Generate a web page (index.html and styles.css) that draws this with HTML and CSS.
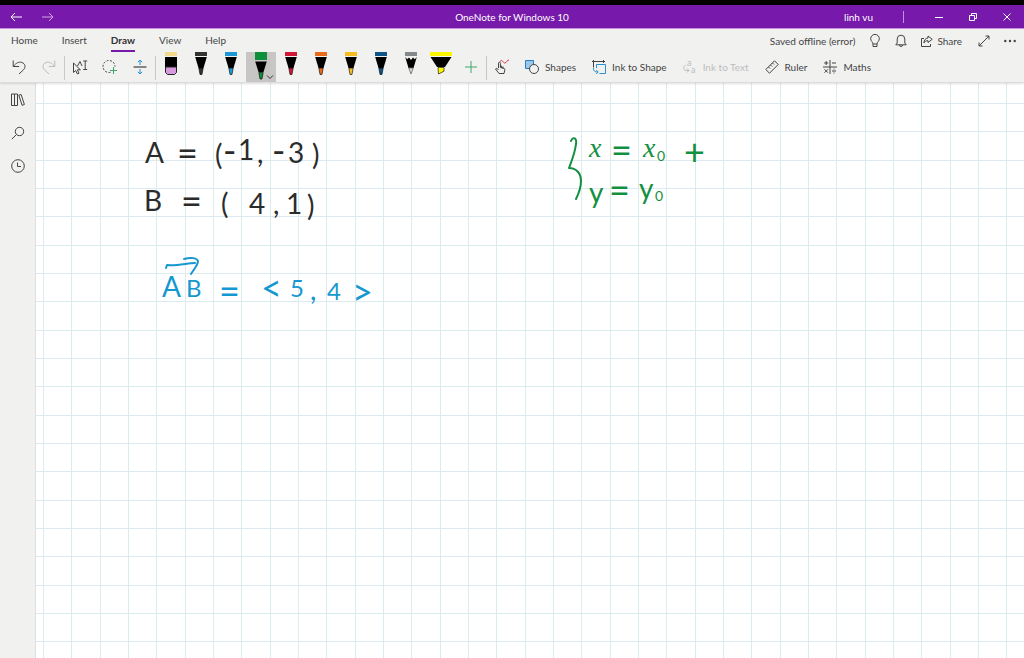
FILE: index.html
```html
<!DOCTYPE html>
<html lang="en">
<head>
    <meta charset="UTF-8">
    <meta name="viewport" content="width=device-width, initial-scale=1.0">
    <title>OneNote for Windows 10</title>
    <link rel="stylesheet" href="styles.css">
</head>
<body>
    <header class="titlebar">
        <div class="nav-buttons">
            <button class="nav-btn" aria-label="Back">
                <svg width="12" height="10" viewBox="0 0 12 10"><path d="M12 5H1M5 1L1 5l4 4"/></svg>
            </button>
            <button class="nav-btn dim" aria-label="Forward">
                <svg width="12" height="10" viewBox="0 0 12 10"><path d="M0 5h11M7 1l4 4-4 4"/></svg>
            </button>
        </div>
        <h1 class="app-title">OneNote for Windows 10</h1>
        <div class="window-controls">
            <span class="user-name">linh vu</span>
            <span class="title-divider"></span>
            <button class="window-btn" aria-label="Minimise">
                <svg width="8" height="8" viewBox="0 0 8 8"><path d="M0 4.5h8"/></svg>
            </button>
            <button class="window-btn" aria-label="Restore">
                <svg width="8" height="8" viewBox="0 0 8 8"><path d="M.5 2.5h5v5h-5zM2.5 2V.5h5v5H6"/></svg>
            </button>
            <button class="window-btn" aria-label="Close">
                <svg width="8" height="8" viewBox="0 0 8 8"><path d="M.5.5l7 7M7.5.5l-7 7"/></svg>
            </button>
        </div>
    </header>

    <nav class="menubar">
        <div class="tabs">
            <button class="tab">Home</button>
            <button class="tab">Insert</button>
            <button class="tab active">Draw</button>
            <button class="tab">View</button>
            <button class="tab">Help</button>
        </div>
        <div class="menu-actions">
            <span class="sync-status">Saved offline (error)</span>
            <button class="menu-btn" aria-label="Tell me">
                <svg width="12" height="14" viewBox="0 0 12 14"><path d="M4 10c0-2-2.300-2.600-2.300-5.300a4.300 4.300 0 0 1 8.600 0C10.300 7.400 8 8 8 10zM4 10v2.500h4V10"/></svg>
            </button>
            <button class="menu-btn" aria-label="Notifications">
                <svg width="12" height="14" viewBox="0 0 12 14"><path d="M.8 10.800h10.400L9.800 9V5a3.800 3.800 0 0 0-7.600 0v4zM4.500 11a1.500 1.500 0 0 0 3 0"/></svg>
            </button>
            <button class="menu-btn share">
                <svg width="12" height="12" viewBox="0 0 12 12"><path d="M3 3.500H.5v8h9V9M7 1l4.200 3.300L7 7.500V5.700C5 5.600 3.800 6.500 3 8c0-3 1.500-4.800 4-5z"/></svg>
                Share
            </button>
            <button class="menu-btn" aria-label="Full screen">
                <svg width="12" height="12" viewBox="0 0 12 12"><path d="M1 11L11 1M7.500 1H11v3.500M1 7.500V11h3.500"/></svg>
            </button>
            <button class="menu-btn" aria-label="More">
                <svg class="dots" width="12" height="12" viewBox="0 0 12 12"><circle cx="1.300" cy="6" r="1.200"/><circle cx="6" cy="6" r="1.200"/><circle cx="10.700" cy="6" r="1.200"/></svg>
            </button>
        </div>
    </nav>

    <div class="toolbar">
        <button class="tool" aria-label="Undo">
            <svg width="14" height="16" viewBox="0 0 14 16"><path d="M1.200 1.500v6h6M1.500 7.200C4 4 7 2.500 9.800 3.400c3.700 1.300 4 5 1.800 7.300L7 15"/></svg>
        </button>
        <button class="tool faded" aria-label="Redo">
            <svg width="14" height="16" viewBox="0 0 14 16"><path d="M12.800 1.500v6h-6M12.500 7.200C10 4 7 2.500 4.200 3.400c-3.700 1.300-4 5-1.800 7.300L7 15"/></svg>
        </button>
        <span class="divider"></span>
        <button class="tool" aria-label="Select text">
            <svg width="16" height="16" viewBox="0 0 16 16"><path d="M1.500 4v9.500l2.200-2 1.700 3.500 1.600-.8-1.600-3.400h3zM5.500 7L8 2.500 10 7M11.200 2h4M13.200 2v8.500M11.200 10.500h4"/></svg>
        </button>
        <button class="tool" aria-label="Lasso select">
            <svg width="16" height="16" viewBox="0 0 16 16"><path stroke-dasharray="2 1.500" d="M8.500 13.300A6 6 0 1 1 13 7.500"/><path class="green" d="M11.500 8v7M8 11.500h7"/></svg>
        </button>
        <button class="tool" aria-label="Insert space">
            <svg width="14" height="16" viewBox="0 0 14 16"><path stroke="#858585" stroke-width="2" d="M.5 8h13"/><path class="blue" d="M7 6V1M4.800 3.200L7 1l2.200 2.200M7 10v5M4.800 12.800L7 15l2.200-2.200"/></svg>
        </button>
        <span class="divider"></span>

        <button class="tool pen" aria-label="Eraser">
            <svg width="14" height="24" viewBox="0 0 14 24"><path fill="#f3d98c" d="M1 0h12v4H1z"/><path fill="#000" d="M1 5h12v11H1z"/><path fill="#d59bdc" stroke="#222" d="M1.500 15h11v5.500l-2 2h-7l-2-2z"/></svg>
        </button>
        <button class="tool pen black" aria-label="Black pen">
            <svg width="14" height="24" viewBox="0 0 14 24"><path class="ink" d="M1 0h12v4H1z"/><path d="M1.200 5h11.600L9.500 16h-5z"/><path class="ink tip" d="M4.800 16h4.400L8 22.500H6z"/></svg>
        </button>
        <button class="tool pen sky" aria-label="Light blue pen">
            <svg width="14" height="24" viewBox="0 0 14 24"><path class="ink" d="M1 0h12v4H1z"/><path d="M1.200 5h11.600L9.500 16h-5z"/><path class="ink tip" d="M4.800 16h4.400L8 22.500H6z"/></svg>
        </button>
        <button class="tool pen leaf selected" aria-label="Green pen">
            <svg width="28" height="28" viewBox="0 0 28 28"><path class="ink" d="M8 0h12v8H8z"/><path d="M8.200 9.500h11.600L16.500 20h-5z"/><path class="ink tip" d="M11.800 20.500h4.400L15 27h-2z"/><path class="chevron" d="M20 23.500l3 3 3-3"/></svg>
        </button>
        <button class="tool pen red" aria-label="Red pen">
            <svg width="14" height="24" viewBox="0 0 14 24"><path class="ink" d="M1 0h12v4H1z"/><path d="M1.200 5h11.600L9.500 16h-5z"/><path class="ink tip" d="M4.800 16h4.400L8 22.500H6z"/></svg>
        </button>
        <button class="tool pen orange" aria-label="Orange pen">
            <svg width="14" height="24" viewBox="0 0 14 24"><path class="ink" d="M1 0h12v4H1z"/><path d="M1.200 5h11.600L9.500 16h-5z"/><path class="ink tip" d="M4.800 16h4.400L8 22.500H6z"/></svg>
        </button>
        <button class="tool pen gold" aria-label="Gold pen">
            <svg width="14" height="24" viewBox="0 0 14 24"><path class="ink" d="M1 0h12v4H1z"/><path d="M1.200 5h11.600L9.500 16h-5z"/><path class="ink tip" d="M4.800 16h4.400L8 22.500H6z"/></svg>
        </button>
        <button class="tool pen navy" aria-label="Dark blue pen">
            <svg width="14" height="24" viewBox="0 0 14 24"><path class="ink" d="M1 0h12v4H1z"/><path d="M1.200 5h11.600L9.500 16h-5z"/><path class="ink tip" d="M4.800 16h4.400L8 22.500H6z"/></svg>
        </button>
        <button class="tool pen pencil" aria-label="Pencil">
            <svg width="14" height="24" viewBox="0 0 14 24"><path class="ink" d="M1 0h12v4H1z"/><path d="M1.200 5l2 2.200L5 5.500 7 8l2-2.500 1.800 1.700 2-2.200L9.500 16h-5z"/><path fill="#ddd" stroke="#666" stroke-width=".8" d="M4.800 16h4.400L7 22z"/></svg>
        </button>
        <button class="tool pen yellow" aria-label="Highlighter">
            <svg width="22" height="24" viewBox="0 0 22 24"><path class="ink" d="M0 0h22v4H0z"/><path d="M.5 5h21L15 15H7z"/><path class="ink tip" d="M8 15.500h6v3.700L8.500 22z"/></svg>
        </button>
        <button class="tool" aria-label="Add pen">
            <svg width="12" height="12" viewBox="0 0 12 12"><path class="green" d="M6 0v12M0 6h12"/></svg>
        </button>
        <span class="divider"></span>

        <button class="tool" aria-label="Draw with touch">
            <svg width="16" height="16" viewBox="0 0 16 16"><path d="M4.500 9V4.200c0-1.400 1.900-1.400 1.900 0V8.500l3.600.9c.8.200 1 .8.800 1.600L10 14.500H5L1.500 10c.8-1.200 2.200-.4 3 .8M6.400 7h1.200v2M9 7.500v2"/><path class="scribble" d="M6 2.500C9-1 9 6 12 3.500 13 2.700 13 1 15 1"/></svg>
        </button>
        <button class="tool-label">
            <svg width="14" height="14" viewBox="0 0 14 14"><path fill="#9bc7ea" stroke="#2b7cbd" d="M.5.5h8v8h-8z"/><circle cx="9" cy="9" r="4.500" fill="#f1f1f0"/></svg>
            Shapes
        </button>
        <button class="tool-label">
            <svg width="14" height="14" viewBox="0 0 14 14"><path d="M1.500 0v3M11.500 0v3M0 1.500h13M1.500 1.500v6"/><path class="blue" d="M4.500 8V4.500h9v9h-6M1.500 8c0 3 1 4 4.500 4M4.200 10L6.200 12l-2 2"/></svg>
            Ink to Shape
        </button>
        <button class="tool-label" disabled>
            <svg width="14" height="14" viewBox="0 0 14 14"><text class="glyph" x="4" y="6">a</text><text class="glyph" x="8" y="13">a</text><path d="M2.500 5C0 7 0 10 3 10.500h3M4 8.500l2 2-2 2"/></svg>
            Ink to Text
        </button>
        <button class="tool-label">
            <svg width="14" height="14" viewBox="0 0 14 14"><path d="M.8 9.500L9.500.8l3.700 3.700-8.700 8.700zM3.500 7l1.500 1.500M5.500 5l1.500 1.500M7.500 3L9 4.500"/></svg>
            Ruler
        </button>
        <button class="tool-label">
            <svg width="14" height="14" viewBox="0 0 14 14"><path d="M7 0v14M0 7h14M1.200 3h4M3.200 1v4M9 3h4M1.500 9.300l3.400 3.400M4.900 9.300l-3.400 3.400M9 11h4M11 8.500v1M11 12.500v1"/></svg>
            Maths
        </button>
    </div>

    <div class="workspace">
        <aside class="sidebar">
            <button class="side-btn" aria-label="Notebooks">
                <svg width="14" height="14" viewBox="0 0 14 14"><path d="M.5 1h3v11.500h-3zM3.500 1h3v11.500h-3zM7.800 2.200l2.300-.7 3.300 10-2.300.8z"/></svg>
            </button>
            <button class="side-btn" aria-label="Search">
                <svg width="14" height="14" viewBox="0 0 14 14"><circle cx="8.500" cy="5.500" r="4.200"/><path d="M5.500 8.500L.8 13.200"/></svg>
            </button>
            <button class="side-btn" aria-label="Recent notes">
                <svg width="14" height="14" viewBox="0 0 14 14"><circle cx="7" cy="7" r="6.300"/><path d="M6.500 3.500v4H10"/></svg>
            </button>
        </aside>

        <main class="page">
            <svg class="canvas" width="100%" height="100%">
                <defs>
                    <!-- three grid cells per tile -->
                    <pattern id="grid" x="7" y="20" width="85" height="85" patternUnits="userSpaceOnUse">
                        <path class="rule" d="M.5 0v85M28.500 0v85M57.500 0v85M0 .5h85M0 28.500h85M0 57.500h85"/>
                    </pattern>
                </defs>
                <rect class="paper" width="100%" height="100%" fill="url(#grid)"/>

                <g class="note dark">
                    <text x="109" y="80">A</text>
                    <text class="big" x="141" y="83">=</text>
                    <text x="179" y="82">(</text>
                    <text class="big" x="187" y="81">-</text>
                    <text x="202" y="77">1</text>
                    <text x="221" y="80">,</text>
                    <text class="big" x="236" y="81">-</text>
                    <text x="252" y="80">3</text>
                    <text x="276" y="82">)</text>

                    <text x="108" y="128">B</text>
                    <text class="big" x="145" y="131">=</text>
                    <text x="185" y="131">(</text>
                    <text x="213" y="131">4</text>
                    <text x="237" y="131">,</text>
                    <text x="250" y="131">1</text>
                    <text x="271" y="133">)</text>
                </g>

                <g class="note blue-ink">
                    <path d="M130 185L131 182C141 183 152 180 159 180M148 176C155 174 161 175 162 178C162 182 158 186 155 191"/>
                    <text x="126" y="214">A</text>
                    <text class="small" x="150" y="214">B</text>
                    <text class="big" x="183" y="221">=</text>
                    <text class="big" x="225" y="218">&lt;</text>
                    <text class="small" x="254" y="214">5</text>
                    <text x="274" y="217">,</text>
                    <text class="small" x="291" y="217">4</text>
                    <text class="big" x="316" y="222">&gt;</text>
                </g>

                <g class="note green-ink">
                    <path d="M535 58C537 53 541 55 540 61C539 70 536 77 533 85C540 85 545 90 545 98C545 105 543 110 540 116"/>
                    <text class="script" x="553" y="74">x</text>
                    <text class="big" x="575" y="80">=</text>
                    <text class="script" x="607" y="74">x</text>
                    <text class="sub" x="621" y="78">0</text>
                    <text class="big" x="648" y="82">+</text>

                    <text x="553" y="120">y</text>
                    <text class="big" x="573" y="120">=</text>
                    <text x="603" y="116">y</text>
                    <text class="sub" x="619" y="118">0</text>
                </g>
            </svg>
        </main>
    </div>
</body>
</html>
```

FILE: styles.css
```css
* {
    margin: 0;
    padding: 0;
    box-sizing: border-box;
}

body {
    display: flex;
    flex-direction: column;
    min-height: 100vh;
    font-family: Lato, "Open Sans", sans-serif;
    font-size: 10px;
    line-height: 14px;
    color: #444;
    background: #f1f1f0;
}

button {
    display: flex;
    align-items: center;
    justify-content: center;
    font: inherit;
    color: inherit;
    background: none;
    border: none;
    white-space: nowrap;
}

svg {
    display: block;
    flex: none;
    overflow: visible;
    fill: none;
    stroke: currentColor;
}

/* Title bar */
.titlebar {
    display: grid;
    grid-template-columns: 1fr auto 1fr;
    height: 29px;
    color: #fff;
    background: #7719aa;
    border-top: 5px solid #000;
    border-bottom: 1px solid #c48fdc;
}

.nav-buttons,
.window-controls {
    display: flex;
    align-items: center;
}

.nav-btn {
    width: 32px;
    height: 23px;
}

.nav-btn.dim {
    color: #d3a6e6;
}

.app-title {
    font-size: 10px;
    font-weight: 400;
    line-height: 24px;
}

.window-controls {
    justify-content: flex-end;
}

.title-divider {
    width: 1px;
    height: 12px;
    margin: 0 18px 0 30px;
    background: #c48fdc;
}

.window-btn {
    width: 34px;
    height: 23px;
}

/* Menu */
.menubar {
    display: flex;
    justify-content: space-between;
    height: 23px;
    padding: 0 8px 0 11px;
}

.tabs {
    display: flex;
    gap: 24px;
}

.tab {
    height: 23px;
    border-bottom: 2px solid transparent;
}

.tab.active {
    font-weight: 700;
    color: #333;
    border-bottom-color: #7719aa;
}

.menu-actions {
    display: flex;
    align-items: center;
    gap: 14px;
}

.menu-btn {
    gap: 4px;
}

.menu-btn.share {
    margin-right: 2px;
}

.dots {
    fill: #444;
    stroke: none;
}

/* Drawing tools */
.toolbar {
    position: relative;
    display: flex;
    height: 31px;
    padding-left: 4px;
    border-bottom: 1px solid #dcdcdc;
    box-shadow: 0 1px 2px rgba(0, 0, 0, 0.12);
}

.tool {
    width: 30px;
    height: 30px;
}

.tool.faded {
    color: #bbb;
}

.divider {
    width: 1px;
    height: 24px;
    margin-top: 4px;
    background: #c8c8c8;
}

.tool-label {
    height: 30px;
    gap: 6px;
    padding: 0 8px;
}

.tool-label:disabled {
    color: #bdbdbd;
}

.glyph {
    font-size: 9px;
    fill: currentColor;
    stroke: none;
}

.green {
    stroke: #3da66b;
}

.blue {
    stroke: #2b8fd0;
}

.scribble {
    stroke: #dc3b4b;
}

.pen {
    align-items: flex-start;
}

.pen svg {
    fill: #000;
    stroke: none;
}

.pen .ink {
    fill: currentColor;
}

.pen .tip {
    stroke: #000;
    stroke-width: 0.6;
}

.pen .chevron {
    fill: none;
    stroke: #333;
}

.pen.selected {
    background: #c8c6c4;
}

.black { color: #333; }
.sky { color: #1b98d5; }
.leaf { color: #0f8f3c; }
.red { color: #d01834; }
.orange { color: #ea6a1c; }
.gold { color: #f6bd20; }
.navy { color: #0e5488; }
.pencil { color: #84888b; }
.yellow { color: #fbf500; }

/* Page */
.workspace {
    display: flex;
    flex: 1;
}

.sidebar {
    width: 36px;
    border-right: 1px solid #dedede;
}

.side-btn {
    width: 35px;
    height: 33px;
}

.page {
    display: flex;
    flex: 1;
    background: #fff;
}

.canvas {
    flex: 1;
    overflow: hidden;
}

.paper {
    stroke: none;
}

.rule {
    stroke: #dcebf0;
}

.note {
    font-size: 28px;
    stroke-width: 2;
    stroke-linecap: round;
    stroke-linejoin: round;
}

.note text {
    fill: currentColor;
    stroke: none;
}

.note .big {
    font-size: 36px;
}

.note .small {
    font-size: 24px;
}

.note .sub {
    font-size: 14px;
}

.note .script {
    font-family: "Liberation Serif", serif;
    font-style: italic;
}

.dark { color: #2b2b2b; }
.blue-ink { color: #1598d0; }
.green-ink { color: #128f3f; }
```
